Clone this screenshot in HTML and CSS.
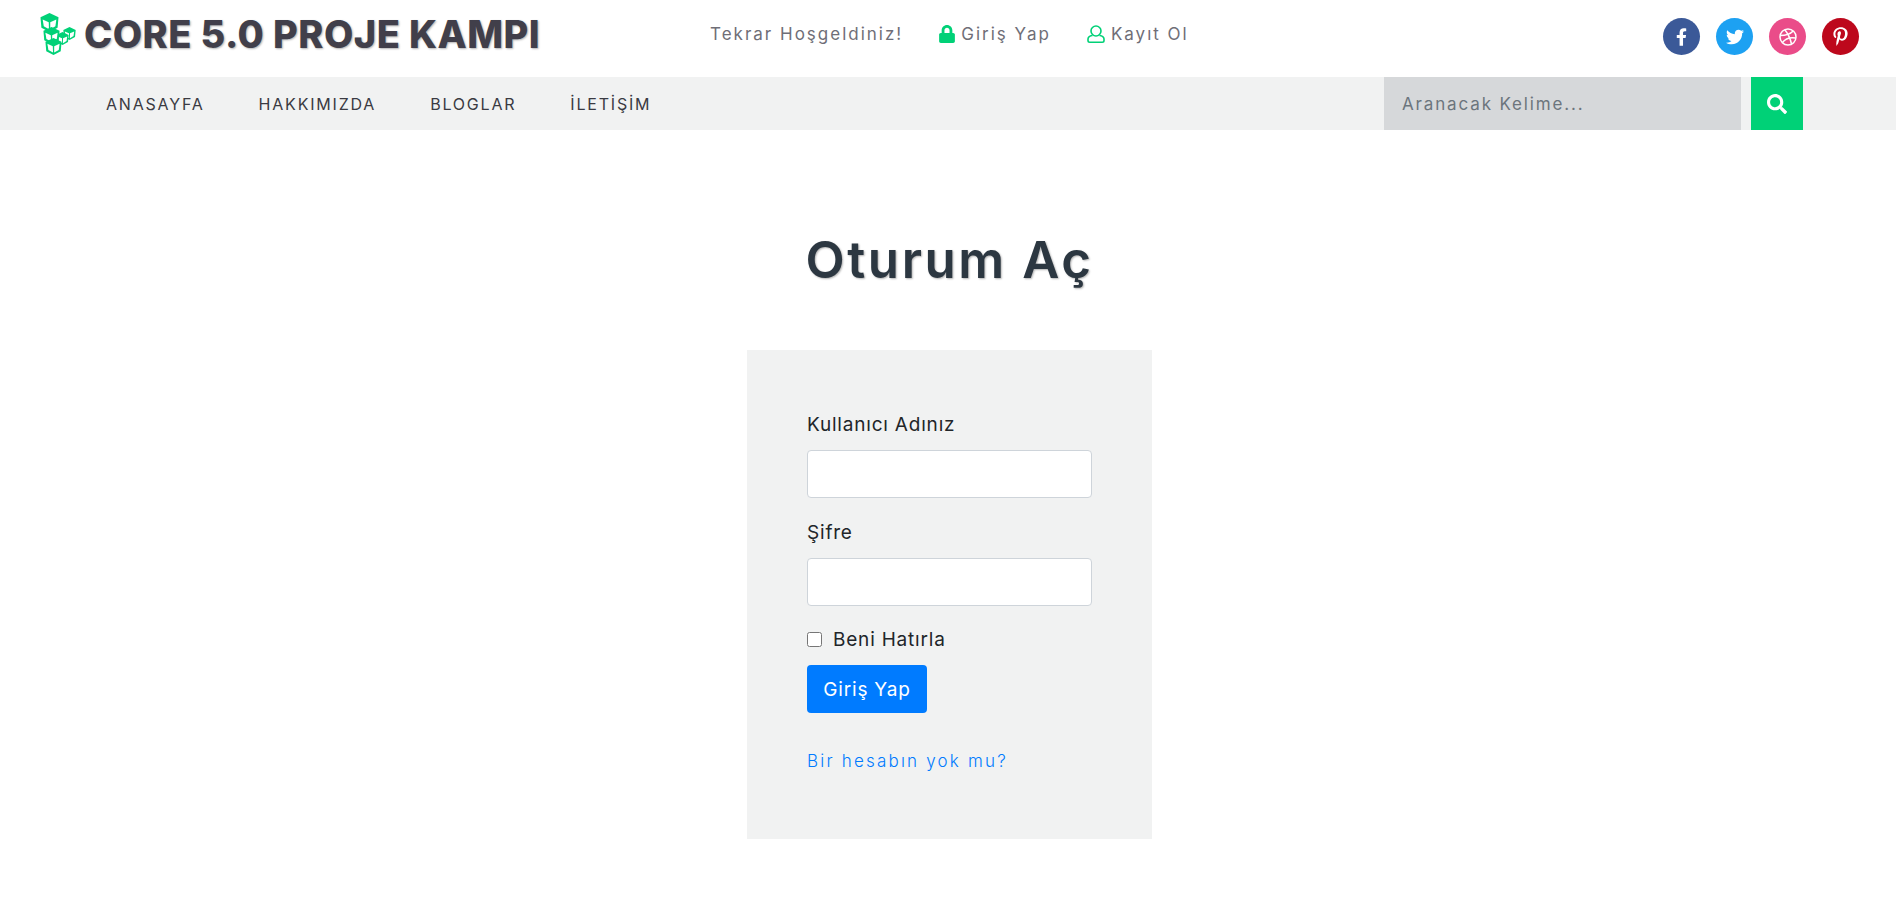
FILE: index.html
```html
<!DOCTYPE html>
<html lang="tr">
<head>
    <meta charset="UTF-8">
    <meta name="viewport" content="width=device-width, initial-scale=1.0">
    <title>Oturum Aç</title>
    <link rel="stylesheet" href="styles.css">
</head>
<body>
    <svg class="defs" width="0" height="0">
        <symbol id="cube" viewBox="0 0 20 20">
            <polygon points="10,0 19.500,4.500 18.500,15.500 10,20 1.500,15.500 0.500,4.500" fill="#00d177"/>
            <polygon points="2.800,6.800 9.200,9.800 9.400,17.200 4,14" fill="#fff"/>
            <polygon points="10.800,9.800 17.200,6.800 16.200,14 10.800,17.200" fill="#fff"/>
        </symbol>
    </svg>

    <header class="topbar">
        <a class="logo" href="#">
            <svg class="logo-icon" width="36" height="42" viewBox="0 0 36 42">
                <use href="#cube" x="0" y="0" width="19" height="19"/>
                <use href="#cube" x="23" y="14" width="13" height="13"/>
                <use href="#cube" x="16" y="19" width="13" height="13"/>
                <use href="#cube" x="3" y="14" width="17" height="17"/>
                <use href="#cube" x="5" y="25" width="17" height="17"/>
            </svg>
            <span>CORE 5.0 PROJE KAMPI</span>
        </a>
        <div class="top-links">
            <span class="welcome">Tekrar Hoşgeldiniz!</span>
            <a href="#">
                <svg width="16" height="18" viewBox="0 0 448 512"><path fill="#00d177" d="M400 224h-24v-72C376 68.2 307.8 0 224 0S72 68.2 72 152v72H48c-26.5 0-48 21.5-48 48v192c0 26.5 21.5 48 48 48h352c26.5 0 48-21.5 48-48V272c0-26.5-21.5-48-48-48zm-104 0H152v-72c0-39.7 32.3-72 72-72s72 32.3 72 72v72z"/></svg>
                Giriş Yap
            </a>
            <a href="#">
                <svg width="18" height="18" viewBox="0 0 18 18"><g fill="none" stroke="#00d177" stroke-width="1.6"><circle cx="9" cy="6" r="5"/><path d="M5.5 10.5C3 10.8 1 11.5 1 14v1.5c0 1 .6 1.7 1.7 1.7h12.6c1.1 0 1.7-.7 1.7-1.7V14c0-2.500-2-3.200-4.500-3.500"/></g></svg>
                Kayıt Ol
            </a>
        </div>
        <div class="socials">
            <a class="fb" href="#"><svg width="11" height="18" viewBox="0 0 320 512"><path fill="#fff" d="M279.14 288l14.22-92.66h-88.91v-60.13c0-25.35 12.42-50.06 52.24-50.06h40.42V6.26S260.43 0 225.36 0c-73.22 0-121.08 44.38-121.08 124.72v70.62H22.89V288h81.39v224h100.17V288z"/></svg></a>
            <a class="tw" href="#"><svg width="18" height="18" viewBox="0 0 512 512"><path fill="#fff" d="M459.37 151.716c.325 4.548.325 9.097.325 13.645 0 138.72-105.583 298.558-298.558 298.558-59.452 0-114.68-17.219-161.137-47.106 8.447.974 16.568 1.299 25.34 1.299 49.055 0 94.213-16.568 130.274-44.832-46.132-.975-84.792-31.188-98.112-72.772 6.498.974 12.995 1.624 19.818 1.624 9.421 0 18.843-1.3 27.614-3.573-48.081-9.747-84.143-51.98-84.143-102.985v-1.299c13.969 7.797 30.214 12.67 47.431 13.319-28.264-18.843-46.781-51.005-46.781-87.391 0-19.492 5.197-37.36 14.294-52.954 51.655 63.675 129.3 105.258 216.365 109.807-1.624-7.797-2.599-15.918-2.599-24.04 0-57.828 46.782-104.934 104.934-104.934 30.213 0 57.502 12.67 76.67 33.137 23.715-4.548 46.456-13.32 66.599-25.34-7.798 24.366-24.366 44.833-46.132 57.827 21.117-2.273 41.584-8.122 60.426-16.243-14.292 20.791-32.161 39.308-52.628 54.253z"/></svg></a>
            <a class="dr" href="#"><svg width="18" height="18" viewBox="0 0 18 18"><g fill="none" stroke="#fff" stroke-width="1.5"><circle cx="9" cy="9" r="8"/><path d="M5.800 1.800C8.500 5 11 9.500 12.500 16"/><path d="M1.200 7.500C6 7.500 10.500 7 14.200 3"/><path d="M3.500 14.500C6 11 11 9 16.800 10"/></g></svg></a>
            <a class="pi" href="#"><svg width="15" height="19" viewBox="0 0 384 512"><path fill="#fff" d="M204 6.500C101.400 6.500 0 74.900 0 185.600 0 256 39.600 296 63.600 296c9.900 0 15.600-27.600 15.600-35.400 0-9.300-23.700-29.100-23.700-67.800 0-80.400 61.200-137.400 140.400-137.400 68.100 0 118.500 38.700 118.500 109.800 0 53.100-21.300 152.700-90.300 152.700-24.900 0-46.200-18-46.200-43.800 0-37.800 26.400-74.400 26.400-113.400 0-66.200-93.900-54.200-93.900 25.800 0 16.800 2.100 35.400 9.600 50.700-13.800 59.400-42 147.900-42 209.100 0 18.900 2.700 37.500 4.500 56.400 3.400 3.800 1.700 3.400 6.900 1.500 50.400-69 48.600-82.500 71.400-172.800 12.300 23.400 44.100 36 69.300 36 106.200 0 153.900-103.500 153.900-196.800C384 71.300 298.200 6.500 204 6.500z"/></svg></a>
        </div>
    </header>

    <nav class="navbar">
        <ul class="menu">
            <li><a href="#">ANASAYFA</a></li>
            <li><a href="#">HAKKIMIZDA</a></li>
            <li><a href="#">BLOGLAR</a></li>
            <li><a href="#">İLETİŞİM</a></li>
        </ul>
        <form class="search">
            <input type="text" placeholder="Aranacak Kelime...">
            <button type="button">
                <svg width="20" height="20" viewBox="0 0 512 512"><path fill="#fff" d="M505 442.700L405.300 343c-4.500-4.500-10.600-7-17-7H372c27.600-35.300 44-79.700 44-128C416 93.100 322.900 0 208 0S0 93.100 0 208s93.100 208 208 208c48.300 0 92.700-16.400 128-44v16.300c0 6.400 2.500 12.500 7 17l99.700 99.700c9.400 9.400 24.600 9.400 33.900 0l28.300-28.300c9.400-9.400 9.400-24.600.1-34zM208 336c-70.700 0-128-57.200-128-128 0-70.700 57.200-128 128-128 70.700 0 128 57.200 128 128 0 70.700-57.200 128-128 128z"/></svg>
            </button>
        </form>
    </nav>

    <main class="login-page">
        <h1>Oturum Aç</h1>
        <form class="login-card">
            <div class="form-group">
                <label for="username">Kullanıcı Adınız</label>
                <input type="text" id="username">
            </div>
            <div class="form-group">
                <label for="password">Şifre</label>
                <input type="password" id="password">
            </div>
            <label class="remember"><input type="checkbox"> Beni Hatırla</label>
            <button type="button" class="btn-login">Giriş Yap</button>
            <a class="register-link" href="#">Bir hesabın yok mu?</a>
        </form>
    </main>
</body>
</html>
```
FILE: styles.css
```css
body {
    margin: 0;
    font-family: "Inter", "Noto Sans", sans-serif;
    font-size: 16px;
    color: #212529;
    background: #fff;
}
a {
    text-decoration: none;
    color: inherit;
}
.defs {
    position: absolute;
}
.topbar {
    display: flex;
    align-items: center;
    height: 77px;
    padding: 0 37px 4px 40px;
    box-sizing: border-box;
}
.logo {
    display: flex;
    align-items: center;
    gap: 8px;
    width: 670px;
    margin-bottom: 6px;
    color: #413f4a;
    font-size: 38px;
    font-weight: 800;
    letter-spacing: 0.45px;
    text-shadow: 1px 1px 2px rgba(0, 0, 0, 0.3);
}
.top-links {
    display: flex;
    align-items: center;
    gap: 36px;
    margin-bottom: 6px;
    color: #6f6e77;
    font-size: 17px;
    letter-spacing: 2px;
}
.top-links a {
    display: flex;
    align-items: center;
    gap: 6px;
}
.socials {
    display: flex;
    gap: 16px;
    margin-left: auto;
}
.socials a {
    display: flex;
    align-items: center;
    justify-content: center;
    width: 37px;
    height: 37px;
    border-radius: 50%;
}
.fb { background: #3b5998; }
.tw { background: #1da1f2; }
.dr { background: #ea4c89; }
.pi { background: #bd081c; }
.navbar {
    display: flex;
    align-items: center;
    height: 53px;
    padding: 0 93px 0 106px;
    background: #f1f2f2;
}
.menu {
    display: flex;
    gap: 54px;
    margin: 0;
    padding: 0;
    list-style: none;
    color: #3a3a42;
    font-size: 16px;
    letter-spacing: 1.8px;
}
.search {
    display: flex;
    gap: 10px;
    height: 53px;
    margin-left: auto;
}
.search input {
    width: 357px;
    padding: 0 18px;
    box-sizing: border-box;
    border: none;
    border-radius: 0;
    background: #d6d8da;
    font: inherit;
    font-size: 17px;
    letter-spacing: 1.85px;
    outline: none;
}
.search input::placeholder {
    color: #6c757d;
    opacity: 1;
}
.search button {
    display: flex;
    align-items: center;
    justify-content: center;
    width: 52px;
    padding: 0;
    border: none;
    background: #00d177;
}
.login-page {
    padding: 100px 0 74px 3px;
}
h1 {
    margin: 0 0 60px;
    color: #2c3741;
    font-size: 51px;
    font-weight: 600;
    letter-spacing: 2.6px;
    line-height: 60px;
    text-align: center;
    text-shadow: 1px 1px 2px rgba(0, 0, 0, 0.3);
}
.login-card {
    display: flex;
    flex-direction: column;
    align-items: flex-start;
    box-sizing: border-box;
    width: 405px;
    height: 489px;
    margin: 0 auto;
    padding: 63px 60px 0;
    background: #f1f2f2;
    font-size: 19px;
    letter-spacing: 0.8px;
}
.form-group {
    width: 100%;
    margin-bottom: 23px;
}
.form-group label {
    display: block;
    margin-bottom: 13px;
    line-height: 24px;
}
.form-group input {
    display: block;
    width: 100%;
    height: 48px;
    box-sizing: border-box;
    border: 1px solid #ced4da;
    border-radius: 4px;
    background: #fff;
}
.remember {
    display: flex;
    align-items: center;
    gap: 11px;
    height: 24px;
    margin: -1px 0 13px;
    line-height: 24px;
}
.remember input {
    width: 15px;
    height: 15px;
    margin: 0 0 2px;
}
.btn-login {
    width: 120px;
    height: 48px;
    padding: 0;
    border: none;
    border-radius: 4px;
    background: #007bff;
    color: #fff;
    font: inherit;
    letter-spacing: 0.8px;
}
.register-link {
    margin-top: 36px;
    color: #007bff;
    font-size: 17px;
    font-weight: 300;
    letter-spacing: 2.2px;
    line-height: 24px;
}
```
